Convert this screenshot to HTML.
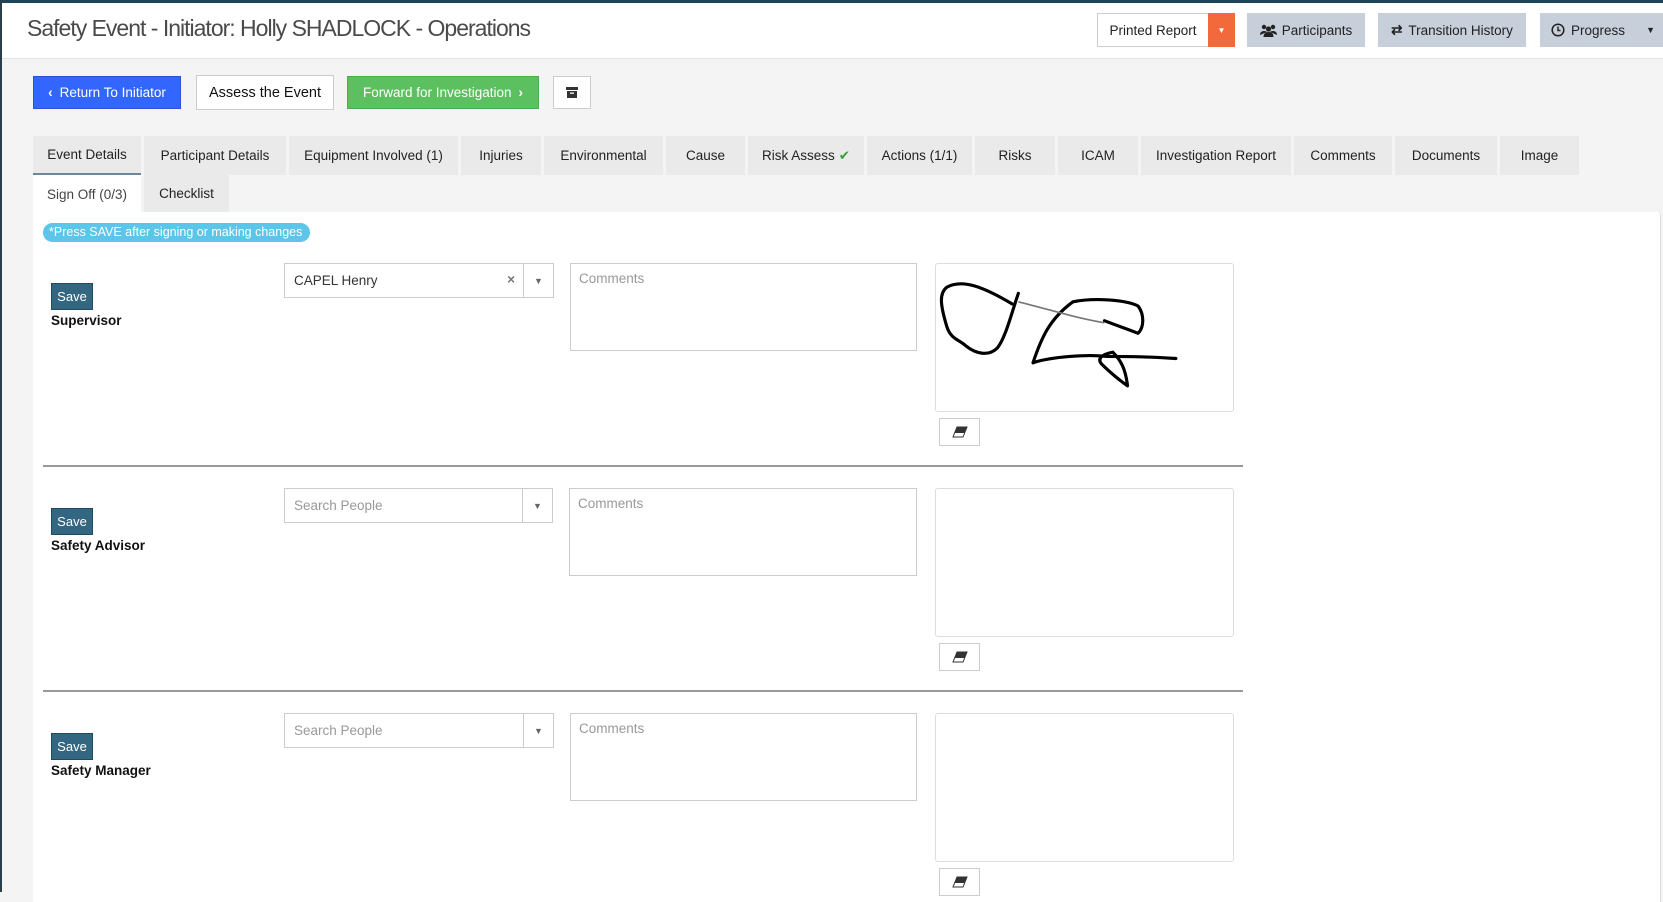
<!DOCTYPE html>
<html><head><meta charset="utf-8"><style>
*{box-sizing:border-box;margin:0;padding:0}
body{width:1663px;height:892px;overflow:hidden;background:#f4f4f4;font-family:"Liberation Sans",sans-serif;font-size:13.5px;color:#222;position:relative}
.a{position:absolute}
.hdr{left:0;top:0;width:1663px;height:59px;background:#fff;border-top:3px solid #1d4457;border-bottom:1px solid #e4e4e4}
.lb{left:0;top:0;width:2px;height:892px;background:#2a3f4a}
.btn{position:absolute;display:flex;align-items:center;justify-content:center;white-space:nowrap}
.tab{position:absolute;background:#eaeaea;display:flex;align-items:center;justify-content:center;color:#222;font-size:13.5px}
.sel{position:absolute;background:#fff;border:1px solid #ccc;height:35px}
.sel .t{position:absolute;left:9px;top:9px;color:#333}
.sel .d{position:absolute;right:0;top:0;width:30px;height:33px;border-left:1px solid #ccc;display:flex;align-items:center;justify-content:center;font-size:9px;color:#666}
.ta{position:absolute;background:#fff;border:1px solid #ccc;width:347px;height:88px;color:#999;padding:7px 8px;font-size:13.5px}
.sig{position:absolute;background:#fff;border:1px solid #ddd;border-radius:3px;width:299px;height:149px}
.er{position:absolute;background:#fff;border:1px solid #ccc;width:41px;height:28px;display:flex;align-items:center;justify-content:center}
.save{position:absolute;left:51px;width:42px;height:27px;background:#336680;border:1px solid #1f4a60;color:#fff;display:flex;align-items:center;justify-content:center;font-size:13px}
.lab{position:absolute;left:51px;font-weight:bold;font-size:13.5px;color:#111}
.hr{position:absolute;left:43px;width:1200px;height:2px;background:#999}
</style></head><body>
<div class="a hdr"></div>
<div class="a lb"></div>
<div class="a" style="left:27px;top:15px;font-size:23px;color:#4a4a4a;letter-spacing:-1px">Safety Event - Initiator: Holly SHADLOCK - Operations</div>
<div class="btn" style="left:1097px;top:13px;width:112px;height:34px;background:#fff;border:1px solid #ccc;color:#222">Printed Report</div>
<div class="btn" style="left:1208px;top:13px;width:27px;height:34px;background:#f26a3b;color:#fff;font-size:8px">▼</div>
<div class="btn" style="left:1247px;top:13px;width:118px;height:34px;background:#c6cfda;color:#222"><svg width="17" height="13" viewBox="0 0 17 13" style="margin-right:5px"><circle cx="4" cy="3" r="2.2" fill="#222"/><circle cx="13" cy="3" r="2.2" fill="#222"/><circle cx="8.5" cy="5" r="2.6" fill="#222"/><path d="M0 11c0-3 2-4 4-4s3 1 3 1M17 11c0-3-2-4-4-4s-3 1-3 1" fill="#222"/><path d="M3.5 13c0-3.5 2.2-5 5-5s5 1.5 5 5z" fill="#222"/></svg>Participants</div>
<div class="btn" style="left:1378px;top:13px;width:148px;height:34px;background:#c6cfda;color:#222"><span style="margin-right:6px;font-weight:bold">⇄</span>Transition History</div>
<div class="btn" style="left:1540px;top:13px;width:123px;height:34px;background:#c6cfda;color:#222;justify-content:flex-start;padding-left:11px"><svg width="14" height="14" viewBox="0 0 14 14" style="margin-right:6px"><circle cx="7" cy="7" r="5.8" fill="none" stroke="#222" stroke-width="1.5"/><path d="M7 3.5V7.5H9.5" fill="none" stroke="#222" stroke-width="1.4"/></svg>Progress<span style="position:absolute;right:8px;font-size:9px">▼</span></div>

<div class="btn" style="left:33px;top:76px;width:148px;height:33px;background:#3366ff;color:#fff;border:1px solid #2a55d0"><span style="margin-right:7px;font-weight:bold">‹</span>Return To Initiator</div>
<div class="btn" style="left:196px;top:75px;width:138px;height:35px;background:#fff;border:1px solid #ccc;color:#111;font-size:14.5px">Assess the Event</div>
<div class="btn" style="left:347px;top:76px;width:192px;height:33px;background:#5cbf60;color:#fff;border:1px solid #4cae4c">Forward for Investigation<span style="margin-left:7px;font-weight:bold">›</span></div>
<div class="btn" style="left:553px;top:76px;width:38px;height:33px;background:#fff;border:1px solid #ccc"><svg width="12" height="11"><rect x="0" y="0" width="12" height="3" fill="#333"/><rect x="1" y="4" width="10" height="7" fill="#333"/><rect x="4" y="5.5" width="4" height="1.3" fill="#fff"/></svg></div>

<div class="tab" style="left:33px;top:136px;width:108px;height:39px;border-bottom:2px solid #6e8799">Event Details</div>
<div class="tab" style="left:144px;top:136px;width:142px;height:39px">Participant Details</div>
<div class="tab" style="left:289px;top:136px;width:169px;height:39px">Equipment Involved (1)</div>
<div class="tab" style="left:461px;top:136px;width:80px;height:39px">Injuries</div>
<div class="tab" style="left:544px;top:136px;width:119px;height:39px">Environmental</div>
<div class="tab" style="left:666px;top:136px;width:79px;height:39px">Cause</div>
<div class="tab" style="left:748px;top:136px;width:116px;height:39px">Risk Assess<span style="color:#3c9a3c;margin-left:4px">✔</span></div>
<div class="tab" style="left:867px;top:136px;width:105px;height:39px">Actions (1/1)</div>
<div class="tab" style="left:975px;top:136px;width:80px;height:39px">Risks</div>
<div class="tab" style="left:1058px;top:136px;width:80px;height:39px">ICAM</div>
<div class="tab" style="left:1141px;top:136px;width:150px;height:39px">Investigation Report</div>
<div class="tab" style="left:1294px;top:136px;width:98px;height:39px">Comments</div>
<div class="tab" style="left:1395px;top:136px;width:102px;height:39px">Documents</div>
<div class="tab" style="left:1500px;top:136px;width:79px;height:39px">Image</div>
<div class="tab" style="left:144px;top:175px;width:85px;height:37px">Checklist</div>

<div class="a" style="left:33px;top:212px;width:1628px;height:690px;background:#fff;border-right:1px solid #ddd;border-radius:0 3px 0 0"></div>
<div class="tab" style="left:33px;top:175px;width:108px;height:38px;background:#fff;color:#444">Sign Off (0/3)</div>

<div class="a" style="left:43px;top:223px;width:267px;height:19px;background:#5bc5ea;border-radius:10px;color:#fff;font-size:12.5px;line-height:19px;padding-left:6px">*Press SAVE after signing or making changes</div>

<!-- Section 1 -->
<div class="save" style="top:283px">Save</div>
<div class="lab" style="top:313px">Supervisor</div>
<div class="sel" style="left:284px;top:263px;width:270px"><span class="t">CAPEL Henry</span><span style="position:absolute;right:38px;top:8px;color:#777;font-weight:bold">×</span><span class="d">▼</span></div>
<div class="ta" style="left:570px;top:263px">Comments</div>
<div class="sig" style="left:935px;top:263px"><svg width="297" height="147" viewBox="0 0 282 140"><g fill="none" stroke="#000" stroke-width="3" stroke-linecap="round" stroke-linejoin="round"><path d="M78 28 C72 45 66 70 58 80 C50 88 38 86 28 78 C22 72 14 72 10 60 C4 40 2 28 10 22 C25 14 45 22 72 38"/><path d="M92 94 C100 70 108 52 130 36 C150 32 180 34 192 40 C198 48 198 60 192 66 C182 62 170 58 160 54"/><path d="M92 94 C110 88 145 86 162 88 C180 88 200 88 228 90"/><path d="M168 84 C158 86 152 90 158 96 C165 103 176 112 182 116 C180 100 176 92 168 84"/></g><path d="M78 36 C110 44 135 52 160 56" fill="none" stroke="#777" stroke-width="1.6"/></svg></div>
<div class="er" style="left:939px;top:418px"><svg width="16" height="12"><path d="M5 1H15L11 11H1Z" fill="#fff" stroke="#333"/><path d="M5 1H15L12.5 7H2.5Z" fill="#333"/></svg></div>
<div class="hr" style="top:465px"></div>

<!-- Section 2 -->
<div class="save" style="top:508px">Save</div>
<div class="lab" style="top:538px">Safety Advisor</div>
<div class="sel" style="left:284px;top:488px;width:269px"><span class="t" style="color:#999">Search People</span><span class="d">▼</span></div>
<div class="ta" style="left:569px;top:488px;width:348px">Comments</div>
<div class="sig" style="left:935px;top:488px"></div>
<div class="er" style="left:939px;top:643px"><svg width="16" height="12"><path d="M5 1H15L11 11H1Z" fill="#fff" stroke="#333"/><path d="M5 1H15L12.5 7H2.5Z" fill="#333"/></svg></div>
<div class="hr" style="top:690px"></div>

<!-- Section 3 -->
<div class="save" style="top:733px">Save</div>
<div class="lab" style="top:763px">Safety Manager</div>
<div class="sel" style="left:284px;top:713px;width:270px"><span class="t" style="color:#999">Search People</span><span class="d">▼</span></div>
<div class="ta" style="left:570px;top:713px">Comments</div>
<div class="sig" style="left:935px;top:713px"></div>
<div class="er" style="left:939px;top:868px"><svg width="16" height="12"><path d="M5 1H15L11 11H1Z" fill="#fff" stroke="#333"/><path d="M5 1H15L12.5 7H2.5Z" fill="#333"/></svg></div>
</body></html>
